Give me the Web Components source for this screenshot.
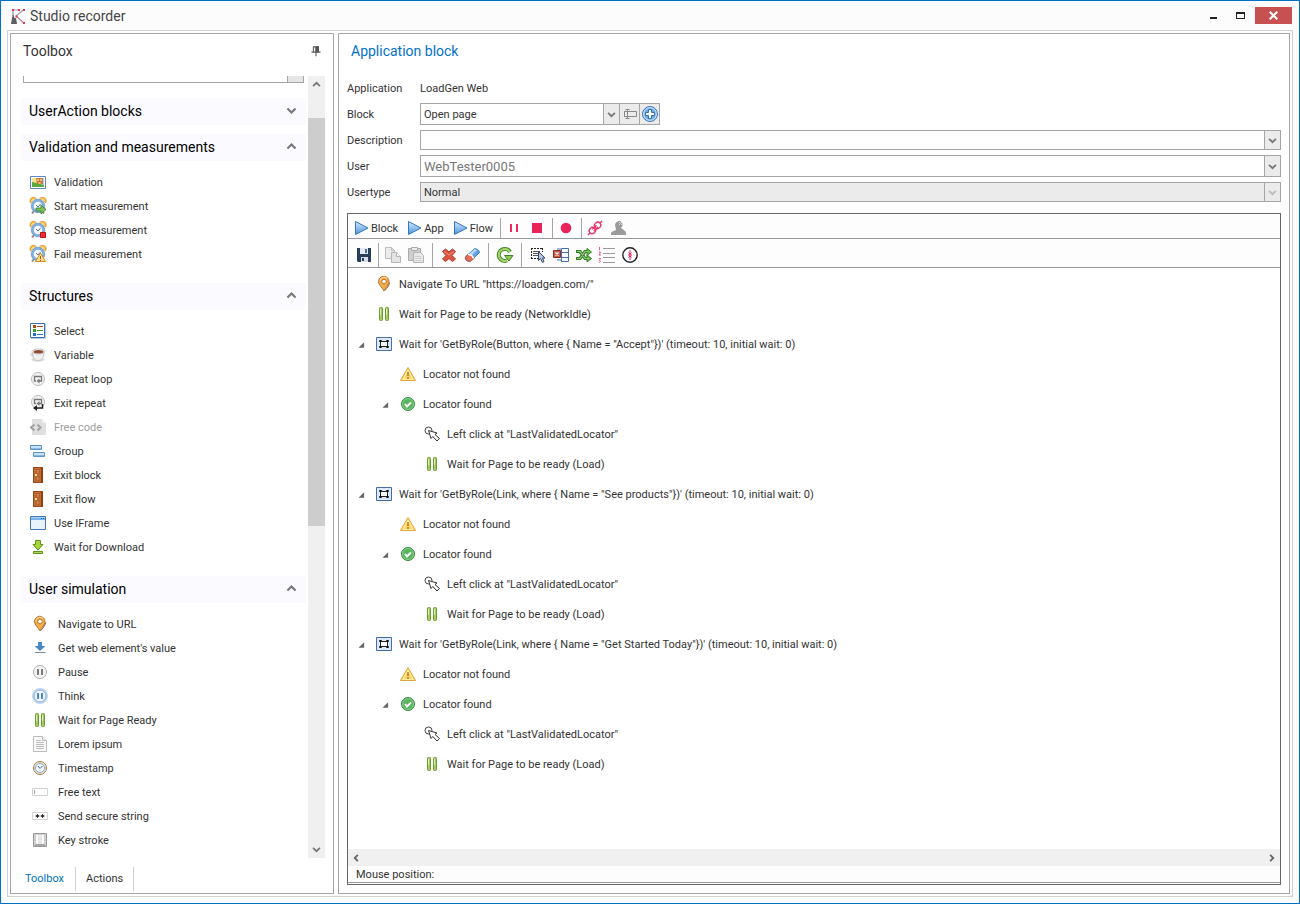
<!DOCTYPE html>
<html lang="en">
<head>
<meta charset="utf-8">
<title>Studio recorder</title>
<style>
  html, body {
    margin: 0;
    height: 100%;
  }

  body {
    font: 11px/16px Roboto, "Noto Sans", sans-serif;
    color: #333;
    background: #fcfcfc;
  }
</style>
</head>
<body>
<studio-window heading="Studio recorder">
  <tool-panel slot="side" heading="Toolbox">
    <tool-group heading="UserAction blocks"></tool-group>
    <tool-group heading="Validation and measurements" open>
      <tool-item icon="picture">Validation</tool-item>
      <tool-item icon="clock-start">Start measurement</tool-item>
      <tool-item icon="clock-stop">Stop measurement</tool-item>
      <tool-item icon="clock-fail">Fail measurement</tool-item>
    </tool-group>
    <tool-group heading="Structures" open>
      <tool-item icon="select">Select</tool-item>
      <tool-item icon="cup">Variable</tool-item>
      <tool-item icon="repeat">Repeat loop</tool-item>
      <tool-item icon="exit-repeat">Exit repeat</tool-item>
      <tool-item icon="code" disabled>Free code</tool-item>
      <tool-item icon="group">Group</tool-item>
      <tool-item icon="door">Exit block</tool-item>
      <tool-item icon="door">Exit flow</tool-item>
      <tool-item icon="iframe">Use IFrame</tool-item>
      <tool-item icon="download">Wait for Download</tool-item>
    </tool-group>
    <tool-group heading="User simulation" open wide>
      <tool-item icon="marker">Navigate to URL</tool-item>
      <tool-item icon="get-value">Get web element's value</tool-item>
      <tool-item icon="pause">Pause</tool-item>
      <tool-item icon="think">Think</tool-item>
      <tool-item icon="bars">Wait for Page Ready</tool-item>
      <tool-item icon="document">Lorem ipsum</tool-item>
      <tool-item icon="clock">Timestamp</tool-item>
      <tool-item icon="textbox">Free text</tool-item>
      <tool-item icon="password">Send secure string</tool-item>
      <tool-item icon="key">Key stroke</tool-item>
    </tool-group>
  </tool-panel>

  <block-panel slot="main" heading="Application block">
    <block-form slot="form"></block-form>
    <recorder-view slot="recorder"></recorder-view>
  </block-panel>
</studio-window>

<script>
const clockFace = `
  <path d="M1.500 4.500a2.500 2.500 0 0 1 4-3M10.500 1.500a2.500 2.500 0 0 1 4 3" fill="none" stroke="#e3a43c" stroke-width="3"/>
  <path d="M1.500 3.500a2.500 2.500 0 0 1 4-2M10.500 1.500a2.500 2.500 0 0 1 4 2" fill="none" stroke="#ffd978" stroke-width="1.500"/>
  <path d="M4 13l-2 2.500M12 13l2 2.500" stroke="#888" stroke-width="2"/>
  <circle cx="8" cy="8" r="5.500" fill="#f4f8fd" stroke="#7fb0de" stroke-width="2.500"/>
  <circle cx="8" cy="8" r="6.800" fill="none" stroke="#5484b8" stroke-width=".6"/>
  <path d="M6 7l2 2 2.500-3" fill="none" stroke="#5a6f88"/>`;

const icons = {
  logo: `
    <path d="M3 2v6M3 2h7M13.500 2L6 8l8 7" fill="none" stroke="#9a9a9d" stroke-width="1.200"/>
    <path d="M3 6l1.500 4H6l1 6H1l1-6z" fill="#5e5e62"/>
    <path d="M7 9l7 6" stroke="#c98795"/>
    <path d="M2 1h2v2H2zM8 1h2v2H8zM13 1h2v2h-2zM5.500 7.500h2v2h-2zM13 14h2v2h-2z" fill="#e8315f"/>`,
  pin: `<path d="M4 2.500h8M4.500 2v7M2 9.500h12M8 10v5" fill="none" stroke="#555" stroke-width="1.400"/><path d="M7 2h5v7.500H7z" fill="#555"/>`,
  picture: `
    <path d="M.5 2.500h15v12H.5z" fill="#fff" stroke="#5f86be"/>
    <path d="M2 4h12v9H2z" fill="#b9d9f0"/>
    <path d="M2 4h5v5H2z" fill="#f5e293"/><path d="M2 8l5 1 7 2v2H2z" fill="#5fa83a"/>
    <path d="M6 4h7v6H7z" fill="#c67a3c"/><path d="M7 5h2v2H7zM10 5h2v2h-2zM8.500 8h2v2h-2z" fill="#f1bd7c"/>`,
  'clock-start': clockFace + `<path d="M6 10h5V7l5 4.500-5 4.500v-3H6z" fill="#7cc25c" stroke="#347a22" stroke-width=".8"/>`,
  'clock-stop': clockFace + `<path d="M10.500 10.500h5v5h-5z" fill="#ee2a32" stroke="#bc1018"/>`,
  'clock-fail': clockFace + `<path d="M10.500 7l5 8.500h-10z" fill="#ffdf84" stroke="#d98b27"/><path d="M10.500 10v3M10.500 14v1" stroke="#9c5c10"/>`,
  select: `
    <path d="M.5.5h14v14H.5z" fill="#f7fbff" stroke="#3a6eb5"/><path d="M1 15.500h14.500V1" fill="none" stroke="#b6c8df"/>
    <path d="M3 2h3v3H3z" fill="#a94d20"/><path d="M3 6h3v3H3z" fill="#3e9b22"/><path d="M3 10h3v3H3z" fill="#286cc4"/>
    <path d="M7 3.500h6" stroke="#a94d20"/><path d="M7 7.500h6" stroke="#3e9b22"/><path d="M7 11.500h6" stroke="#286cc4"/>`,
  cup: `
    <ellipse cx="8" cy="12.500" rx="6.500" ry="2" fill="#d8d8d8"/>
    <path d="M2.500 5c0 6 2 8.500 5.500 8.500S14 11 14 5z" fill="#f1f1f1" stroke="#c4c4c4"/>
    <path d="M3 9C0 9 0 6 2.500 6" fill="none" stroke="#bbb"/>
    <ellipse cx="8.500" cy="4.500" rx="6.500" ry="2.500" fill="#fff" stroke="#c4c4c4"/><ellipse cx="8.500" cy="4.800" rx="5" ry="1.700" fill="#8f4b32"/>`,
  repeat: `
    <circle cx="8" cy="8" r="6.500" fill="#f3f3f3" stroke="#bbb"/>
    <path d="M6 10H4.500V5.500h7V10H9" fill="none" stroke="#777" stroke-width="1.300"/><path d="M9.500 7.500v5L6.500 10z" fill="#777"/>`,
  'exit-repeat': `
    <circle cx="8" cy="7" r="6.500" fill="#f3f3f3" stroke="#bbb"/>
    <path d="M6 8.500H4.500v-4h7v4H9" fill="none" stroke="#777" stroke-width="1.300"/><path d="M9.500 6v5l-3-2.500z" fill="#777"/>
    <path d="M12.500 9v4H6" fill="none" stroke="#222" stroke-width="1.500"/><path d="M7 10v6l-4-3z" fill="#222"/>`,
  code: `
    <path d="M2 0h10l4 4v12H2z" fill="#dfdfdf"/><path d="M12 0v4h4z" fill="#f1f1f1"/>
    <path d="M4.500 5.500L1 8.500l3.500 3M7.500 5.500l3 3-3 3" fill="none" stroke="#a2a2a2" stroke-width="2"/>`,
  group: `
    <path d="M.5 2.500h11v4H.5zM3.500 9.500h11v4h-11z" fill="#c5e2f8" stroke="#5b94ca"/>
    <path d="M1 5.500h10M4 12.500h10" stroke="#84b8e1"/>`,
  door: `
    <path d="M3 0h10v16H3z" fill="#9a4a1c"/><path d="M4 1h8v14H4z" fill="#c06a30"/><path d="M11 1h2v15h-2z" fill="#8f4116"/>
    <path d="M6.500 2.500h3v4h-3zM6.500 9.500h3v4h-3z" fill="#cf7f45" stroke="#a6562a" stroke-width=".6"/><path d="M5 7h2v2H5z" fill="#f7e4b4"/>`,
  iframe: `
    <path d="M.5 1.500h15v13H.5z" fill="#e9f1fa" stroke="#4574b5"/><path d="M1 2h14v3H1z" fill="#76b2eb"/>
    <path d="M1 2.500h14" stroke="#a9d4f8"/><path d="M11 3h1v1h-1zM13 3h1v1h-1z" fill="#315e94"/>`,
  download: `
    <path d="M5.500 1.500h5v4H13L8 11 3 5.500h2.500z" fill="#a5d63a" stroke="#5c9416"/>
    <path d="M3.500 12.500h9v2h-9z" fill="#a9d655" stroke="#5c9416"/>`,
  marker: `
    <path d="M8 15C6 11 2.500 9 2.500 5.500a5 5 0 0 1 10.500 0C13 9 10 11 8 15z" fill="#f2ac48" stroke="#b9752d"/>
    <path d="M4 5a4 4 0 0 1 7-2.500" fill="none" stroke="#ffe0a0"/><circle cx="8" cy="5.500" r="2.300" fill="#fff" stroke="#b87528"/>
    <path d="M9 14.500c2-3 4.500-4.500 4.500-8" stroke="#8a623a" fill="none"/>`,
  'get-value': `<path d="M6 2h4v4h3.500L8 11 2.500 6H6z" fill="#4c87c3"/><path d="M3 12.500h10.500" stroke="#7e8d9e"/>`,
  pause: `
    <circle cx="8" cy="8" r="6.500" fill="#f3f3f3" stroke="#b1b1b1"/><path d="M5 5h2v6H5zM9 5h2v6H9z" fill="#7a7a7a"/>`,
  think: `
    <circle cx="8" cy="8" r="7.200" fill="#edf5ff" stroke="#bad4f2" stroke-width="1.600"/><circle cx="8" cy="8" r="6" fill="none" stroke="#86abd7"/>
    <path d="M5 5h2v6H5zM9 5h2v6H9z" fill="#4d88cc"/>`,
  bars: `
    <rect x="3.500" y="1.500" width="3" height="13" rx="1" fill="#a2cc5c" stroke="#6b9d35"/>
    <rect x="9.500" y="1.500" width="3" height="13" rx="1" fill="#a2cc5c" stroke="#6b9d35"/>
    <path d="M4.500 3v6M10.500 3v6" stroke="#dcefbc"/>`,
  document: `
    <path d="M1.500.5h9l4 4v11h-13z" fill="#fafafa" stroke="#bcbcbc"/><path d="M10.500.5v4h4" fill="#eee" stroke="#bcbcbc"/>
    <path d="M4 4.500h5M4 6.500h8M4 8.500h8M4 10.500h8M4 12.500h8" stroke="#bcbcbc"/>`,
  clock: `
    <circle cx="8" cy="8" r="6.500" fill="#fff" stroke="#a37b51"/><circle cx="8" cy="8" r="5.500" fill="#f4faff" stroke="#dcc39c"/>
    <circle cx="8" cy="8" r="4.500" fill="none" stroke="#87afd9"/><path d="M6 6l2 2.500L10.500 6" fill="none" stroke="#496987"/>`,
  textbox: `<path d="M.5 4.500h15v7H.5z" fill="#fff" stroke="#d0d0d0"/><path d="M2.500 6v4" stroke="#aaa"/>`,
  password: `
    <path d="M.5 4.500h15v7H.5z" fill="#fff" stroke="#d5d5d5"/><path d="M3.500 8h4M5.500 6v4M8.500 8h4M10.500 6v4" stroke="#444"/>
    <circle cx="5.500" cy="8" r="1.300" fill="#222"/><circle cx="10.500" cy="8" r="1.300" fill="#222"/>`,
  key: `
    <path d="M1.500 1.500h13v13h-13z" fill="#cfcfcf" stroke="#999"/><path d="M2 14l2-2h8l2 2z" fill="#a5a5a5"/>
    <path d="M4 3h8v9H4z" fill="#f8f8f8"/><path d="M6 3h4v9H6z" fill="#e8e8e8"/>`,
  play: `
    <defs><linearGradient id="p" x2="0" y2="1"><stop stop-color="#d4eafc"/><stop offset="1" stop-color="#4a94dc"/></linearGradient></defs>
    <path d="M1.500 1.500L14 8 1.500 14.500z" fill="url(#p)" stroke="#3577bd" stroke-linejoin="round"/>`,
  'rec-pause': `<path d="M4 4h2v8H4zM10 4h2v8h-2z" fill="#ed2a5e"/>`,
  'rec-stop': `<path d="M3 3h10v10H3z" fill="#e9225a"/>`,
  record: `<circle cx="8" cy="8" r="5.300" fill="#e9225a"/>`,
  plug: `
    <g transform="rotate(-45 8 8)" fill="none" stroke="#ec3064" stroke-width="1.300">
      <rect x="1" y="5" width="6.500" height="6" rx="3"/><rect x="8.500" y="5" width="6.500" height="6" rx="3"/>
      <path d="M-2 8h3M15 8h3M5 7h6M5 9.500h6"/>
    </g>`,
  user: `<path d="M10 1a4 4 0 0 1 1 7l4 3c1 1 1 2 1 4H1c0-3 0-3 5-5L5 5c0-2 2-4 5-4z" fill="#9b9b9b"/><path d="M9 2l3 3M12 2L9 5" stroke="#d8d8d8"/>`,
  save: `
    <path d="M1 1h14v14H2l-1-1z" fill="#283e59"/><path d="M4 1h8v6H4z" fill="#e4ebf4"/><path d="M5 10h7v5H5z" fill="#d6dde6"/>
    <path d="M6 11h2v3H6z" fill="#283e59"/><path d="M9 2h2v4H9z" fill="#53708f"/>`,
  copy: `
    <path d="M.5.5h6l3 3v8h-9z" fill="#ececec" stroke="#bdbdbd"/><path d="M6.500.5v3h3" fill="none" stroke="#bdbdbd"/>
    <path d="M6.500 5.500h5l4 4v6h-9z" fill="#e4e4e4" stroke="#b4b4b4"/><path d="M11.500 5.500v4h4" fill="#f6f6f6" stroke="#b4b4b4"/>`,
  paste: `
    <path d="M.5 1.500h12v12H.5z" fill="#cfcfcf" stroke="#adadad"/><path d="M3.500.5h6v3h-6z" fill="#eee" stroke="#aaa"/>
    <path d="M5.500 5.500h7l3 3v7h-10z" fill="#e8e8e8" stroke="#b4b4b4"/><path d="M7 9.500h6M7 11.500h7M7 13.500h7" stroke="#d0d0d0"/>`,
  remove: `<path d="M1.500 4.500l3-2.500L8 5l3.500-3 3 2.500L11 8.500l3.500 3.500-3 2.500L8 11.500l-3.500 3-3-2.500L5 8.500z" fill="#dc5340" stroke="#a9382c" stroke-linejoin="round"/><path d="M3 4.500l5 3.500 5-3.500" fill="none" stroke="#f4917c"/>`,
  eraser: `
    <path d="M1.500 10L10 2c1.500-1 5.500 1 5.500 3.500l-9 8.500c-2 1-6-1-5-4z" fill="#5fa2e4" stroke="#3d76b8"/>
    <path d="M1.500 10l3-3c2 0 5 2 5.500 4.500L6.500 14c-2 1-6-1-5-4z" fill="#e0705a" stroke="#b9543f"/>
    <path d="M5 7l5.500-5 2.500 1-5 5z" fill="#b5daf8"/><path d="M4 7.500c3 0 5 2 5.500 4" fill="none" stroke="#fff" stroke-width="1.500"/>`,
  refresh: `
    <path d="M13 5A6 6 0 1 0 10 13.500" fill="none" stroke="#3f8528" stroke-width="4"/>
    <path d="M13 5A6 6 0 1 0 10 13.500" fill="none" stroke="#a5d66b" stroke-width="2"/>
    <path d="M7.500 8.500h8.500l-4 5.500z" fill="#8ccb4c" stroke="#3f8528" stroke-linejoin="round"/>`,
  marquee: `
    <path d="M1 1.500h12M1 11.500h7M1.500 1v11M12.500 1v4" fill="none" stroke="#222" stroke-dasharray="2 1"/><path d="M3 4.500h7M3 6.500h5M3 8.500h5" stroke="#555"/>
    <path d="M8.500 4.500v9l2-2 2 4 1.500-1-1.500-3.500H15z" fill="#b3c8e2" stroke="#34495f"/>`,
  'table-remove': `
    <path d="M8.500 1.500h7v13h-7zM8.500 5.500h7M8.500 10.500h7" fill="#f8fbff" stroke="#446fa8"/><path d="M4 2h4M4 13h4" stroke="#446fa8"/>
    <path d="M.5 3.500h7v7h-7z" fill="#cc5a4c" stroke="#8d2f27"/><path d="M2.500 5.500l3 3M5.500 5.500l-3 3" stroke="#fff" stroke-width="1.300"/>`,
  shuffle: `
    <path d="M0 4.500h4l5 7h4M0 11.500h4l5-7h4" fill="none" stroke="#357d2c" stroke-width="3.200"/>
    <path d="M11 1.500l4.500 3.500-4.500 3.500zM11 8l4.500 3.500L11 15z" fill="#6cba50" stroke="#357d2c"/>
    <path d="M1 4.500h3l5 7h4M1 11.500h3l5-7h4" fill="none" stroke="#8fd071" stroke-width="1.200"/>`,
  numbered: `
    <path d="M4 1.500h12M4 6.500h12M4 10.500h12M4 15.500h12" stroke="#9a9a9a"/>
    <path d="M.5 0v3M0 5h1.500L0 8h2M0 11.500h1.500l-1 2 1 1-1.500 1" fill="none" stroke="#ef557d"/>`,
  breakpoint: `<circle cx="8" cy="8" r="7.200" fill="#fff" stroke="#222" stroke-width="1.400"/><path d="M8 3v10M6 8h4M6.500 5.500L8 7l1.500-1.500M6.500 10.500L8 9l1.500 1.500" fill="none" stroke="#e9225a"/>`,
  locator: `
    <path d="M.5 1.500h15v13H.5z" fill="#dbe8fa" stroke="#466cab"/><path d="M4.500 5.500h7v5h-7z" fill="#f7faff" stroke="#222"/>
    <path d="M3.500 4.500h2v1h-2zM10.500 4.500h2v1h-2zM3.500 10.500h2v1h-2zM10.500 10.500h2v1h-2z" fill="#fff" stroke="#111"/>`,
  warning: `
    <path d="M8 1.500l7.500 13H.5z" fill="#ffd766" stroke="#e0a63a" stroke-linejoin="round"/><path d="M8 4l5 9.500H3z" fill="none" stroke="#fff0ad"/>
    <path d="M8 6v4M8 11v2" stroke="#b97a1e" stroke-width="1.500"/>`,
  ok: `
    <circle cx="8" cy="8" r="6.500" fill="#58b45c" stroke="#2f8a3b"/><circle cx="8" cy="8" r="5.500" fill="none" stroke="#93d694" stroke-width=".8"/>
    <path d="M5 8l2 2.500 4-4" fill="none" stroke="#fff" stroke-width="2"/>`,
  click: `
    <circle cx="4.500" cy="4.500" r="3.500" fill="none" stroke="#444"/>
    <path d="M4.500 4.500l2.500 8 1.800-2 4.200 4.500 2.500-2.500-4.500-4 2-1.500z" fill="#fff" stroke="#333"/>`,
  rename: `<path d="M5.500 5.500h9v5h-9zM5.500 3v10M3.500 3.500h4M3.500 12.500h4M2 5.500h3M2 10.500h3M2.500 5.500v5" fill="none" stroke="#888"/>`,
  add: `
    <circle cx="8" cy="8" r="7.500" fill="#a8d0f6" stroke="#4379b6"/><circle cx="8" cy="8" r="6.200" fill="#69a9e8" stroke="#c3def8"/>
    <path d="M6.500 3.500h3v3h3v3h-3v3h-3v-3h-3v-3h3z" fill="#fff" stroke="#3571b3"/>`,
  'chevron-down': `<path d="M3 5.500L8 10.500 13 5.500" fill="none" stroke="#777" stroke-width="2.600"/>`,
  'chevron-up': `<path d="M3 10.500L8 5.500 13 10.500" fill="none" stroke="#777" stroke-width="2.600"/>`,
  'chevron-left': `<path d="M11 3L6 8l5 5" fill="none" stroke="#666" stroke-width="3"/>`,
  'chevron-right': `<path d="M5 3l5 5-5 5" fill="none" stroke="#666" stroke-width="3"/>`,
  expanded: `<path d="M13 5v9H4z" fill="#666"/>`,
  minimize: `<path d="M4 9h7v2H4z" fill="#222"/>`,
  maximize: `<path d="M3 4h9v7H3zM4 6v4h7V6z" fill="#222" fill-rule="evenodd"/>`,
  close: `<path d="M4 4l8 8M12 4l-8 8" stroke="#fff" stroke-width="2.200"/>`
};

class UiIcon extends HTMLElement {
  connectedCallback() {
    this.attachShadow({ mode: 'open' });
    this.shadowRoot.innerHTML = `
      <style>
        :host {
          display: block;
          flex: none;
          width: var(--icon-size, 16px);
          height: var(--icon-size, 16px);
        }

        svg {
          display: block;
          width: 100%;
          height: 100%;
          overflow: visible;
        }
      </style>
      <svg viewBox="0 0 16 16" aria-hidden="true">${icons[this.getAttribute('name')]}</svg>
    `;
  }
}

class StudioWindow extends HTMLElement {
  connectedCallback() {
    this.attachShadow({ mode: 'open' });
    this.shadowRoot.innerHTML = `
      <style>
        :host {
          display: flex;
          flex-direction: column;
          box-sizing: border-box;
          height: 100vh;
          padding: 0 6px 6px;
          border: 1px solid #0072c6;
          background: #fcfcfc;
        }

        header {
          display: flex;
          align-items: center;
          height: 29px;
          padding: 0 1px 0 3px;
        }

        h1 {
          flex: 1;
          margin: 0 0 0 4px;
          color: #444;
          font-size: 14px;
          font-weight: normal;
        }

        button {
          display: flex;
          align-items: center;
          justify-content: center;
          width: 27px;
          height: 17px;
          padding: 0;
          border: 0;
          background: none;
        }

        .close {
          width: 37px;
          margin-left: 1px;
          background: #c75050;
          --icon-size: 15px;
        }

        main {
          display: grid;
          grid-template-columns: 324px 1fr;
          gap: 4px;
          flex: 1;
          min-height: 0;
          padding: 2px;
          border: 1px solid #d0d0d0;
          background: #fff;
        }

        ::slotted(*) {
          border: 1px solid #a5a5a5;
          min-height: 0;
          min-width: 0;
        }
      </style>
      <header>
        <ui-icon name="logo"></ui-icon>
        <h1>${this.getAttribute('heading')}</h1>
        <button aria-label="Minimize"><ui-icon name="minimize"></ui-icon></button>
        <button aria-label="Maximize"><ui-icon name="maximize"></ui-icon></button>
        <button class="close" aria-label="Close"><ui-icon name="close"></ui-icon></button>
      </header>
      <main>
        <slot name="side"></slot>
        <slot name="main"></slot>
      </main>
    `;
  }
}

class ToolPanel extends HTMLElement {
  connectedCallback() {
    this.attachShadow({ mode: 'open' });
    this.shadowRoot.innerHTML = `
      <style>
        :host {
          display: flex;
          flex-direction: column;
        }

        header {
          display: flex;
          align-items: center;
          justify-content: space-between;
          height: 34px;
          margin-bottom: 8px;
          padding: 0 11px 0 12px;
          --icon-size: 12px;
        }

        h2 {
          margin: 0;
          font-size: 14px;
          font-weight: normal;
        }

        header button {
          padding: 0;
          border: 0;
          background: none;
        }

        .body {
          display: flex;
          gap: 2px;
          flex: 1;
          min-height: 0;
          padding: 0 8px 0 10px;
        }

        .list {
          display: flex;
          flex-direction: column;
          gap: 9px;
          flex: 1;
          overflow: hidden;
        }

        .search {
          display: flex;
          flex: none;
          align-items: flex-end;
          height: 7px;
          margin: 0 2px 6px;
          overflow: hidden;
        }

        .search input {
          flex: 1;
          box-sizing: border-box;
          height: 22px;
          border: 1px solid #a5a5a5;
          border-right: 0;
          outline: 0;
        }

        .search button {
          box-sizing: border-box;
          width: 17px;
          height: 22px;
          border: 1px solid #a5a5a5;
          background: #e6e6e6;
        }

        .scroll {
          display: flex;
          flex-direction: column;
          align-items: center;
          width: 17px;
          background: #f0f0f0;
          --icon-size: 11px;
        }

        .scroll ui-icon {
          margin: 3px 0;
        }

        .before {
          flex: 25;
        }

        .thumb {
          flex: 408;
          width: 100%;
          background: #cdcdcd;
        }

        .after {
          flex: 315;
        }

        nav {
          display: flex;
          align-items: flex-start;
          padding: 9px 0 2px 4px;
        }

        nav a {
          padding: 4px 10px;
          border-right: 1px solid #d0d0d0;
          color: #333;
          text-decoration: none;
        }

        nav a:first-child {
          padding-right: 11px;
          color: #0072c6;
        }
      </style>
      <header>
        <h2>${this.getAttribute('heading')}</h2>
        <button aria-label="Pin panel"><ui-icon name="pin"></ui-icon></button>
      </header>
      <div class="body">
        <div class="list">
          <div class="search"><input type="text" aria-label="Search"><button aria-label="Find"></button></div>
          <slot></slot>
        </div>
        <div class="scroll">
          <ui-icon name="chevron-up"></ui-icon>
          <div class="before"></div>
          <div class="thumb"></div>
          <div class="after"></div>
          <ui-icon name="chevron-down"></ui-icon>
        </div>
      </div>
      <nav>
        <a href="#toolbox">Toolbox</a>
        <a href="#actions">Actions</a>
      </nav>
    `;
  }
}

class ToolGroup extends HTMLElement {
  connectedCallback() {
    const open = this.hasAttribute('open');
    this.attachShadow({ mode: 'open' });
    this.shadowRoot.innerHTML = `
      <style>
        :host {
          display: block;
          flex: none;
        }

        button {
          display: flex;
          align-items: center;
          justify-content: space-between;
          width: 100%;
          height: 27px;
          padding: 0 8px 2px;
          border: 0;
          background: #fafaff;
          color: #000;
          font: inherit;
          font-size: 14px;
          --icon-size: 13px;
        }

        .items {
          padding: 9px 9px 8px;
        }

        :host([wide]) .items {
          padding-left: 11px;
          --item-gap: 10px;
        }
      </style>
      <button aria-expanded="${open}">
        ${this.getAttribute('heading')}
        <ui-icon name="chevron-${open ? 'up' : 'down'}"></ui-icon>
      </button>
      ${open ? '<div class="items"><slot></slot></div>' : ''}
    `;
  }
}

class ToolItem extends HTMLElement {
  connectedCallback() {
    this.attachShadow({ mode: 'open' });
    this.shadowRoot.innerHTML = `
      <style>
        :host {
          display: flex;
          align-items: center;
          gap: var(--item-gap, 8px);
          height: 24px;
        }

        :host([disabled]) {
          color: #a0a0a0;
        }

        span {
          padding-top: 2px;
        }
      </style>
      <ui-icon name="${this.getAttribute('icon')}"></ui-icon>
      <span><slot></slot></span>
    `;
  }
}

class BlockPanel extends HTMLElement {
  connectedCallback() {
    this.attachShadow({ mode: 'open' });
    this.shadowRoot.innerHTML = `
      <style>
        :host {
          display: flex;
          flex-direction: column;
          padding: 0 8px 8px;
        }

        h2 {
          margin: 0 4px 7px;
          color: #0072c6;
          font-size: 14px;
          font-weight: normal;
          line-height: 34px;
        }
      </style>
      <h2>${this.getAttribute('heading')}</h2>
      <slot name="form"></slot>
      <slot name="recorder"></slot>
    `;
  }
}

class BlockForm extends HTMLElement {
  connectedCallback() {
    this.attachShadow({ mode: 'open' });
    this.shadowRoot.innerHTML = `
      <style>
        :host {
          display: grid;
          grid-template-columns: 73px 1fr;
          grid-auto-rows: 26px;
          align-items: center;
          margin-bottom: 8px;
        }

        label, .text {
          padding-top: 2px;
        }

        .combo {
          display: flex;
          box-sizing: border-box;
          height: 20px;
          border: 1px solid #a5a5a5;
          background: #fff;
        }

        .tall {
          height: 22px;
        }

        .short {
          width: 240px;
        }

        select {
          flex: 1;
          min-width: 0;
          padding: 1px 3px 0;
          border: 0;
          outline: 0;
          appearance: none;
          background: none;
          color: #333;
          font: inherit;
          opacity: 1;
        }

        .large select {
          padding-top: 2px;
          color: #777;
          font-size: 13px;
        }

        .arrow, button {
          display: flex;
          align-items: center;
          justify-content: center;
          width: 15px;
          padding: 0;
          border: 0;
          border-left: 1px solid #a5a5a5;
          background: #ebebeb;
          --icon-size: 11px;
        }

        button {
          width: 20px;
          --icon-size: 16px;
        }

        .off {
          background: #ebebeb;
        }

        .off ui-icon {
          opacity: .4;
        }
      </style>
      <span class="text">Application</span>
      <span class="text">LoadGen Web</span>

      <label for="block">Block</label>
      <div class="combo tall short">
        <select id="block"><option>Open page</option></select>
        <span class="arrow"><ui-icon name="chevron-down"></ui-icon></span>
        <button aria-label="Rename block"><ui-icon name="rename"></ui-icon></button>
        <button aria-label="Add block"><ui-icon name="add"></ui-icon></button>
      </div>

      <label for="description">Description</label>
      <div class="combo">
        <select id="description"><option></option></select>
        <span class="arrow"><ui-icon name="chevron-down"></ui-icon></span>
      </div>

      <label for="user">User</label>
      <div class="combo tall large">
        <select id="user"><option>WebTester0005</option></select>
        <span class="arrow"><ui-icon name="chevron-down"></ui-icon></span>
      </div>

      <label for="usertype">Usertype</label>
      <div class="combo off">
        <select id="usertype" disabled><option>Normal</option></select>
        <span class="arrow"><ui-icon name="chevron-down"></ui-icon></span>
      </div>
    `;
  }
}

class ToolButton extends HTMLElement {
  connectedCallback() {
    this.attachShadow({ mode: 'open' });
    this.shadowRoot.innerHTML = `
      <style>
        :host {
          display: block;
        }

        button {
          display: flex;
          align-items: center;
          justify-content: center;
          gap: 1px;
          min-width: 23px;
          height: 24px;
          padding: 0 3px;
          border: 0;
          background: none;
          color: #333;
          font: inherit;
        }

        :host([labelled]) button {
          padding: 0 4px 0 5px;
        }

        span {
          padding-top: 2px;
        }
      </style>
      <button aria-label="${this.getAttribute('label')}">
        <ui-icon name="${this.getAttribute('icon')}"></ui-icon>
        ${this.hasAttribute('labelled') ? '<span><slot></slot></span>' : ''}
      </button>
    `;
  }
}

const waitSteps = (locator) => [
  [0, 'locator', `Wait for 'GetByRole(${locator})' (timeout: 10, initial wait: 0)`, true],
  [1, 'warning', 'Locator not found'],
  [1, 'ok', 'Locator found', true],
  [2, 'click', 'Left click at "LastValidatedLocator"'],
  [2, 'bars', 'Wait for Page to be ready (Load)']
];

const steps = [
  [0, 'marker', 'Navigate To URL "https://loadgen.com/"'],
  [0, 'bars', 'Wait for Page to be ready (NetworkIdle)'],
  ...waitSteps('Button, where { Name = "Accept"}'),
  ...waitSteps('Link, where { Name = "See products"}'),
  ...waitSteps('Link, where { Name = "Get Started Today"}')
];

class StepTree extends HTMLElement {
  connectedCallback() {
    this.attachShadow({ mode: 'open' });
    this.shadowRoot.innerHTML = `
      <style>
        :host {
          display: block;
        }

        ul {
          margin: 0;
          padding: 1px 0 0;
          list-style: none;
        }

        li {
          display: flex;
          align-items: center;
          height: 30px;
          padding-left: calc(8px + 24px * var(--level));
          white-space: nowrap;
        }

        .toggle {
          width: 20px;
          --icon-size: 10px;
        }

        .text {
          margin-left: 7px;
          padding-top: 2px;
        }
      </style>
      <ul role="tree">
        ${steps.map(([level, icon, text, expanded]) => `
          <li role="treeitem" style="--level: ${level}">
            <span class="toggle">${expanded ? '<ui-icon name="expanded"></ui-icon>' : ''}</span>
            <ui-icon name="${icon}"></ui-icon>
            <span class="text">${text}</span>
          </li>`).join('')}
      </ul>
    `;
  }
}

class RecorderView extends HTMLElement {
  connectedCallback() {
    this.attachShadow({ mode: 'open' });
    this.shadowRoot.innerHTML = `
      <style>
        :host {
          display: flex;
          flex: 1;
          flex-direction: column;
          min-height: 0;
          border: 1px solid #666;
        }

        .toolbar {
          display: flex;
          align-items: center;
          box-sizing: border-box;
          border-bottom: 1px solid #999;
          background: #fdfdfd;
        }

        .run {
          height: 25px;
          padding: 4px 1px 0;
        }

        .edit {
          height: 29px;
          padding: 4px 4px 0;
        }

        hr {
          align-self: stretch;
          width: 1px;
          margin: 0 2px 0 3px;
          border: 0;
          background: #a5a5a5;
        }

        .edit hr.wide {
          margin: 0 4px 0 5px;
        }

        step-tree {
          flex: 1;
          min-height: 0;
          overflow: hidden;
        }

        .scroll {
          display: flex;
          align-items: center;
          justify-content: space-between;
          height: 17px;
          padding: 0 3px;
          background: #f0f0f0;
          --icon-size: 10px;
        }

        footer {
          margin-bottom: 1px;
          padding: 2px 8px 0;
          border-bottom: 1px solid #999;
          line-height: 14px;
          background: #fdfdfd;
        }
      </style>
      <div class="toolbar run" role="toolbar" aria-label="Run">
        <tool-button icon="play" label="Run block" labelled>Block</tool-button>
        <tool-button icon="play" label="Run app" labelled>App</tool-button>
        <tool-button icon="play" label="Run flow" labelled>Flow</tool-button>
        <hr>
        <tool-button icon="rec-pause" label="Pause"></tool-button>
        <tool-button icon="rec-stop" label="Stop"></tool-button>
        <hr>
        <tool-button icon="record" label="Record"></tool-button>
        <hr>
        <tool-button icon="plug" label="Connect"></tool-button>
        <tool-button icon="user" label="User"></tool-button>
      </div>
      <div class="toolbar edit" role="toolbar" aria-label="Edit">
        <tool-button icon="save" label="Save"></tool-button>
        <hr>
        <tool-button icon="copy" label="Copy"></tool-button>
        <tool-button icon="paste" label="Paste"></tool-button>
        <hr class="wide">
        <tool-button icon="remove" label="Delete"></tool-button>
        <tool-button icon="eraser" label="Clear"></tool-button>
        <hr class="wide">
        <tool-button icon="refresh" label="Refresh"></tool-button>
        <hr class="wide">
        <tool-button icon="marquee" label="Select elements"></tool-button>
        <tool-button icon="table-remove" label="Remove rows"></tool-button>
        <tool-button icon="shuffle" label="Shuffle"></tool-button>
        <tool-button icon="numbered" label="Line numbers"></tool-button>
        <tool-button icon="breakpoint" label="Collapse"></tool-button>
      </div>
      <step-tree></step-tree>
      <div class="scroll">
        <ui-icon name="chevron-left"></ui-icon>
        <ui-icon name="chevron-right"></ui-icon>
      </div>
      <footer>Mouse position:</footer>
    `;
  }
}

customElements.define('ui-icon', UiIcon);
customElements.define('tool-button', ToolButton);
customElements.define('tool-item', ToolItem);
customElements.define('tool-group', ToolGroup);
customElements.define('tool-panel', ToolPanel);
customElements.define('block-form', BlockForm);
customElements.define('step-tree', StepTree);
customElements.define('recorder-view', RecorderView);
customElements.define('block-panel', BlockPanel);
customElements.define('studio-window', StudioWindow);
</script>
</body>
</html>
